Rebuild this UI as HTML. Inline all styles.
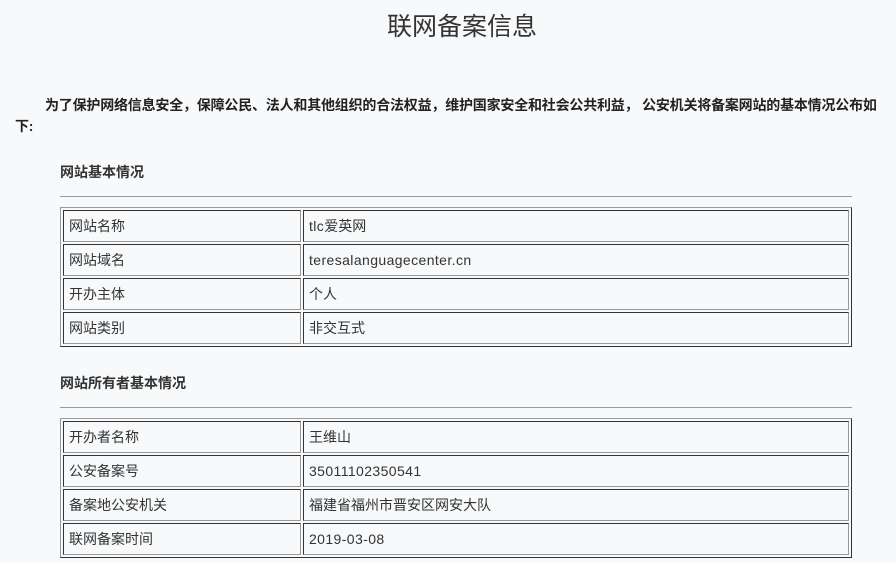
<!DOCTYPE html>
<html><head><meta charset="utf-8"><style>
body{margin:0;background:#f7f9fb;font-family:"Liberation Sans","Noto Sans CJK SC",sans-serif;color:#333;width:896px;height:562px;overflow:hidden;position:relative}
h1{position:absolute;top:10px;left:0;width:924px;text-align:center;font-size:25px;font-weight:normal;margin:0;color:#333;line-height:34px}
.p{position:absolute;top:95px;left:15px;width:868px;font-size:14px;font-weight:bold;line-height:21px;text-indent:30px;color:#222;letter-spacing:-0.2px}
.h{position:absolute;left:60px;font-size:14px;font-weight:bold;color:#333}
.hr{position:absolute;left:60px;width:792px;height:1px;background:#999}
table{position:absolute;left:60px;width:792px;border:1px solid;border-color:#999 #333 #333 #999;border-spacing:2px;font-size:14px;color:#333}
td{border:1px solid;border-color:#333 #999 #999 #333;height:30px;padding:0 5px;line-height:30px}
td:first-child{width:226px}
.l{letter-spacing:0.4px}
</style></head><body>
<h1>联网备案信息</h1>
<div class="p">为了保护网络信息安全，保障公民、法人和其他组织的合法权益，维护国家安全和社会公共利益， 公安机关将备案网站的基本情况公布如<br>下:</div>
<div class="h" style="top:162px">网站基本情况</div>
<div class="hr" style="top:196px"></div>
<table style="top:207px">
<tr><td>网站名称</td><td><span class="l">tlc</span>爱英网</td></tr>
<tr><td>网站域名</td><td class="l">teresalanguagecenter.cn</td></tr>
<tr><td>开办主体</td><td>个人</td></tr>
<tr><td>网站类别</td><td>非交互式</td></tr>
</table>
<div class="h" style="top:373px">网站所有者基本情况</div>
<div class="hr" style="top:407px"></div>
<table style="top:418px">
<tr><td>开办者名称</td><td>王维山</td></tr>
<tr><td>公安备案号</td><td class="l">35011102350541</td></tr>
<tr><td>备案地公安机关</td><td>福建省福州市晋安区网安大队</td></tr>
<tr><td>联网备案时间</td><td class="l">2019-03-08</td></tr>
</table>
</body></html>
